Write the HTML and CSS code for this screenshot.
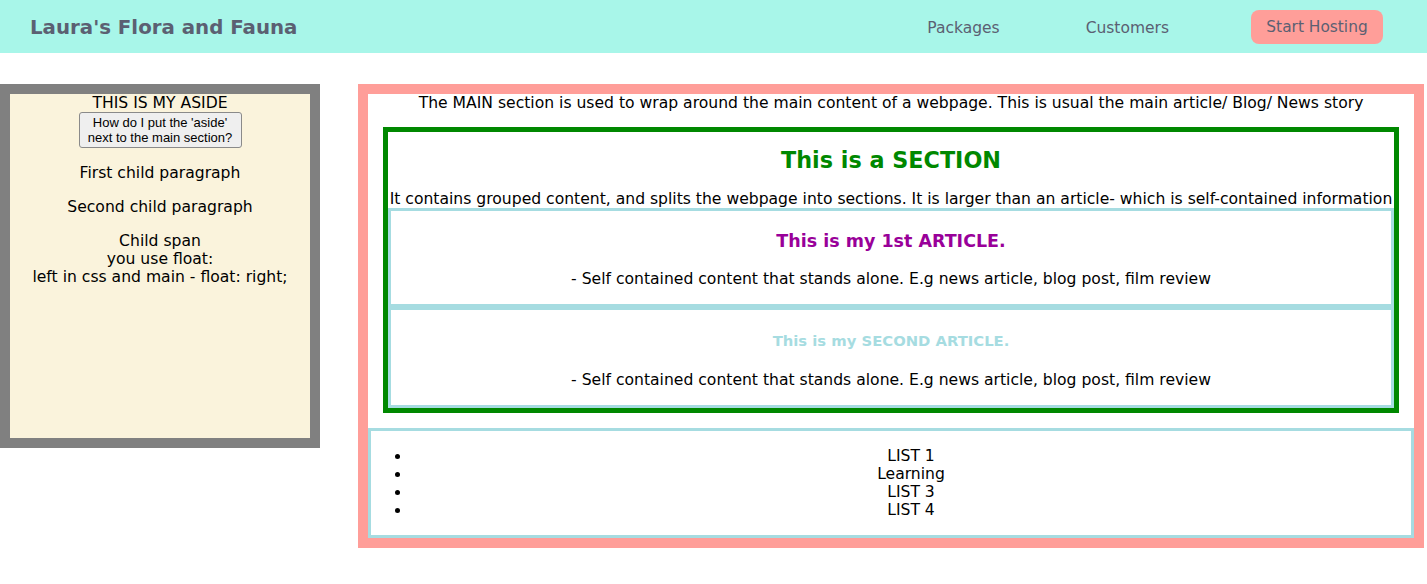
FILE: index.html
```html
<!DOCTYPE html>
<html lang="en">
<head>
<meta charset="utf-8">
<title>Laura's Flora and Fauna</title>
<link rel="stylesheet" href="styles.css">
</head>
<body>
<header class="topbar">
  <div class="brand">Laura's Flora and Fauna</div>
  <nav class="nav">
    <a class="nav-link" href="#">Packages</a>
    <a class="nav-link" href="#">Customers</a>
    <a class="nav-cta" href="#">Start Hosting</a>
  </nav>
</header>
<div class="layout">
  <aside class="aside">
    <div class="aside-title">THIS IS MY ASIDE</div>
    <button class="aside-btn" type="button">How do I put the 'aside'<br>next to the main section?</button>
    <p class="aside-p">First child paragraph</p>
    <p class="aside-p">Second child paragraph</p>
    <span class="aside-span">Child span<br>you use float:<br>left in css and main - float: right;</span>
  </aside>
  <main class="main">
    <div class="main-intro">The MAIN section is used to wrap around the main content of a webpage. This is usual the main article/ Blog/ News story</div>
    <section class="section">
      <h2 class="section-title">This is a SECTION</h2>
      <div class="section-text">It contains grouped content, and splits the webpage into sections. It is larger than an article- which is self-contained information</div>
      <article class="article">
        <h3 class="article-title">This is my 1st ARTICLE.</h3>
        <p class="article-text">- Self contained content that stands alone. E.g news article, blog post, film review</p>
      </article>
      <article class="article article-second">
        <h4 class="article-title2">This is my SECOND ARTICLE.</h4>
        <p class="article-text2">- Self contained content that stands alone. E.g news article, blog post, film review</p>
      </article>
    </section>
    <div class="list-box">
      <ul class="list">
        <li>LIST 1</li>
        <li>Learning</li>
        <li>LIST 3</li>
        <li>LIST 4</li>
      </ul>
    </div>
  </main>
</div>
</body>
</html>
```

FILE: styles.css
```css
* {
  box-sizing: border-box;
}

body {
  margin: 0;
  font-family: "DejaVu Sans", Verdana, sans-serif;
  font-size: 15.6px;
  line-height: 18px;
  color: #000;
  background: #fff;
}

.topbar {
  height: 53px;
  background: #a8f6e9;
  display: flex;
  align-items: center;
  justify-content: space-between;
  padding: 2px 44px 0 30px;
}

.brand {
  font-size: 19.8px;
  font-weight: bold;
  color: #5b6072;
  line-height: 24px;
}

.nav {
  display: flex;
  align-items: center;
  gap: 54px;
}

.nav-link {
  color: #5b6072;
  text-decoration: none;
  font-size: 15.5px;
  padding: 0 16px;
}

.nav-cta {
  color: #5b6072;
  text-decoration: none;
  font-size: 15.4px;
  background: #ff9e99;
  border-radius: 8px;
  height: 34px;
  width: 132px;
  display: flex;
  align-items: center;
  justify-content: center;
  margin-left: 12px;
  margin-top: -2px;
}

.layout {
  display: flex;
  align-items: flex-start;
  padding-top: 31px;
}

.aside {
  width: 320px;
  height: 364px;
  border: 10px solid #808080;
  background: #faf3dc;
  text-align: center;
  flex-shrink: 0;
  padding-top: 1px;
}

.aside-title {
  line-height: 17px;
}

.aside-btn {
  font-family: "Liberation Sans", Arial, sans-serif;
  font-size: 13px;
  line-height: 15px;
  color: #000;
  background: #efefef;
  border: 1px solid #8a8a8a;
  border-radius: 3px;
  padding: 2px 6px;
  width: 163px;
  height: 36px;
}

.aside-p {
  margin: 16px 0;
}

.main {
  width: 1066px;
  margin-left: 38px;
  border: 10px solid #ff9e99;
  flex-shrink: 0;
}

.main-intro {
  text-align: center;
  padding-top: 1px;
  line-height: 17px;
}

.section {
  margin: 15px;
  border: 5px solid #008800;
  text-align: center;
}

.section-title {
  margin: 14px 0 15px;
  font-size: 22.3px;
  line-height: 29px;
  color: #008800;
}

.section-text {
  white-space: nowrap;
  padding-top: 1px;
  line-height: 17px;
}

.article {
  border: 3px solid #a6dce1;
}

.article-title {
  margin: 19px 0 18px;
  font-size: 17.5px;
  line-height: 22px;
  color: #990099;
}

.article-text {
  margin: 0 0 16px;
  padding-top: 1px;
  line-height: 17px;
}

.article-title2 {
  margin: 21px 0 21px;
  font-size: 14.8px;
  line-height: 19px;
  color: #a6dce1;
}

.article-text2 {
  margin: 0 0 16px;
  padding-top: 1px;
  line-height: 17px;
}

.list-box {
  margin-top: 15px;
  border: 3px solid #a6dce1;
}

.list {
  margin: 16px 0;
  padding-left: 40px;
}

.list li {
  text-align: center;
}
```
